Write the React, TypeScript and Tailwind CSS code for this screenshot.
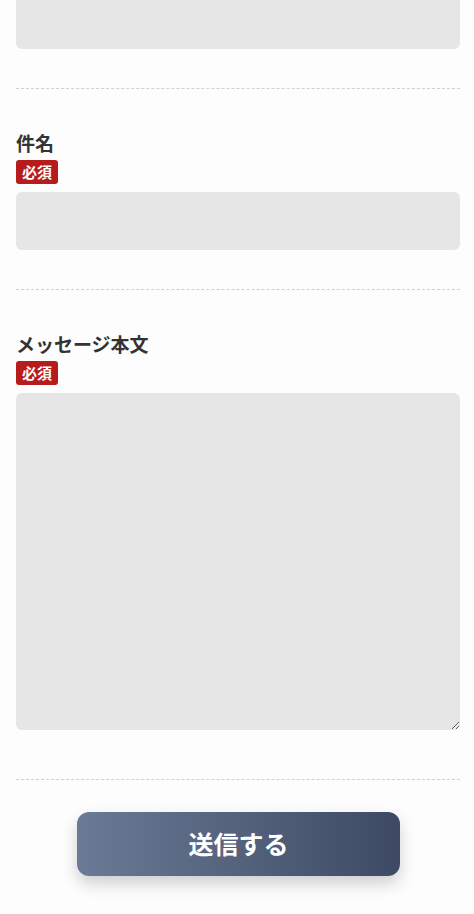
import React from 'react';

const FONT = { fontFamily: '"Noto Sans CJK JP", "Noto Sans", sans-serif' };

function Required() {
  return (
    <span className="block w-fit bg-[#b71c1c] text-white text-[15px] font-bold leading-[24px] h-[24px] px-[6px] rounded-[3px]">
      必須
    </span>
  );
}

function Label({ text }: { text: string }) {
  return (
    <div>
      <p className="mb-[4px] text-[19px] leading-[27px] font-semibold text-[#333]">{text}</p>
      <Required />
    </div>
  );
}

export default function App() {
  return (
    <div className="min-h-[914px] bg-[#fdfdfd] overflow-hidden" style={FONT}>
      <div className="pl-4 pr-[14px]">
        {/* previous field (scrolled off) */}
        <div className="-mt-[9px] pb-[39px] border-b border-dashed border-[#d0d0d0]">
          <input className="block w-full h-[58px] bg-[#e6e6e6] rounded-md outline-none" />
        </div>

        {/* 件名 */}
        <div className="pt-[40px] pb-[39px] border-b border-dashed border-[#d0d0d0]">
          <Label text="件名" />
          <input className="mt-[8px] block w-full h-[58px] bg-[#e6e6e6] rounded-md outline-none" />
        </div>

        {/* メッセージ本文 */}
        <div className="pt-[40px] pb-[49px] border-b border-dashed border-[#d0d0d0]">
          <Label text="メッセージ本文" />
          <textarea className="mt-[8px] block w-full h-[337px] bg-[#e6e6e6] rounded-md outline-none" />
        </div>

        <div className="flex justify-center pt-[32px] pl-[1px]">
          <button className="w-[323px] h-[64px] rounded-[12px] bg-gradient-to-r from-[#6b7b95] to-[#3e4a64] text-white text-[25px] font-bold shadow-[0_8px_16px_rgba(0,0,0,0.18)]">
            送信する
          </button>
        </div>
      </div>
    </div>
  );
}
